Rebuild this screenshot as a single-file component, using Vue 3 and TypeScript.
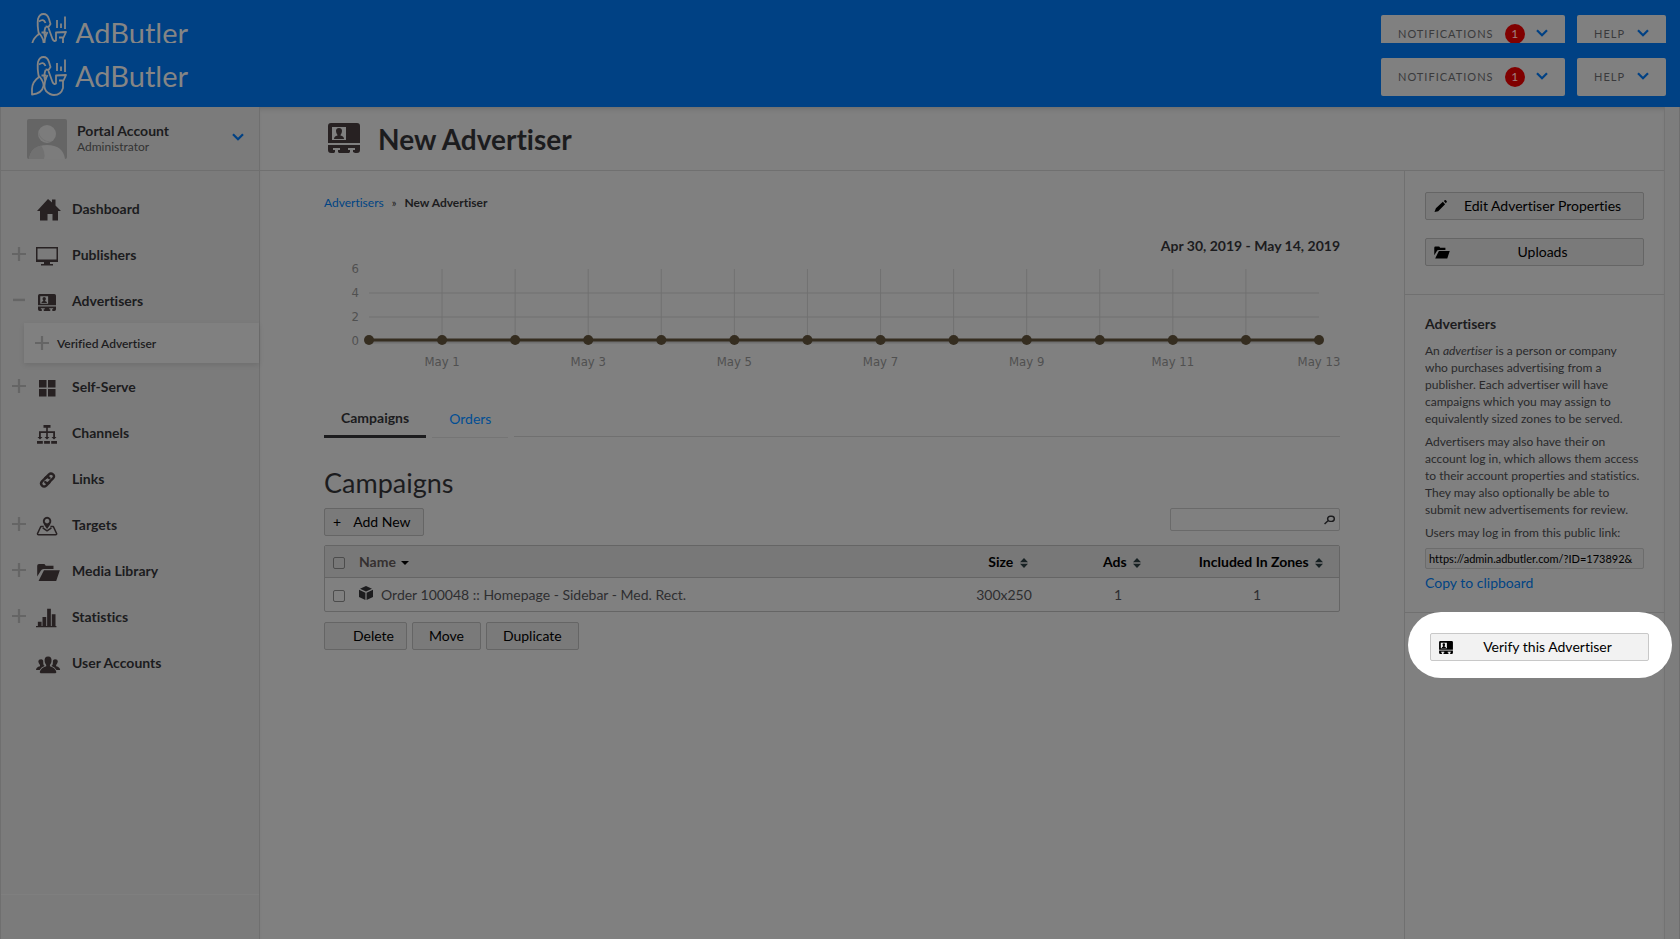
<script setup lang="ts">
import { ref } from 'vue'

interface NavItem {
  label: string
  icon: string
  toggle?: 'plus' | 'minus'
  child?: string
}

const nav: NavItem[] = [
  { label: 'Dashboard', icon: 'home' },
  { label: 'Publishers', icon: 'monitor', toggle: 'plus' },
  { label: 'Advertisers', icon: 'board', toggle: 'minus', child: 'Verified Advertiser' },
  { label: 'Self-Serve', icon: 'tiles', toggle: 'plus' },
  { label: 'Channels', icon: 'tree' },
  { label: 'Links', icon: 'link' },
  { label: 'Targets', icon: 'target', toggle: 'plus' },
  { label: 'Media Library', icon: 'folder', toggle: 'plus' },
  { label: 'Statistics', icon: 'bars', toggle: 'plus' },
  { label: 'User Accounts', icon: 'users' },
]

const points = Array.from({ length: 14 }, (_, i) => ({
  x: `${(i / 13) * 100}%`,
  label: i % 2 === 1 ? `May ${i}` : '',
}))
const yTicks = [6, 4, 2, 0]

const columns = ['Size', 'Ads', 'Included In Zones']
const rows = [{ name: 'Order 100048 :: Homepage - Sidebar - Med. Rect.', cells: ['300x250', '1', '1'] }]
const loginUrl = ref('https://admin.adbutler.com/?ID=173892&')
const query = ref('')
</script>

<template>
  <div class="page">
    <svg class="defs" aria-hidden="true">
      <symbol id="home" viewBox="0 0 26 26">
        <path d="M12 2l4 3.400V2.600h3.500v6L25 14h-3v9.500h-5.500V17h-5v6.500H4V14H1z" />
      </symbol>
      <symbol id="monitor" viewBox="2 0 26 26">
        <path fill-rule="evenodd" d="M2 4h22v15h-8v2h3v1.500H7V21h3v-2H2zM3.500 5.500v11h19v-11z" />
      </symbol>
      <symbol id="board" viewBox="0 0 32 30">
        <path fill-rule="evenodd" d="M3 0h26q3 0 3 3v17H0V3q0-3 3-3zM4 4v13h14V4z" />
        <path d="M6 16q0-3 3.500-3.500V12Q8 10 8 8q0-3 3-3t3 3q0 2-1.500 4v.5Q16 13 16 16z" />
        <path d="M0 22h32v5q0 3-3 3h-2l-2-1v-2h2v-2h-7v2h2v2l-1 1H11l-1-1v-2h2v-2H5v2h2v2l-1 1H3q-3 0-3-3z" />
      </symbol>
      <symbol id="tiles" viewBox="2 0 26 26">
        <path d="M5 5h7.500v7.500H5zM14 5h7.500v7.500H14zM5 14h7.500v7.500H5zM14 14h7.500v7.500H14z" />
      </symbol>
      <symbol id="tree" viewBox="2 0 26 26">
        <path d="M9.500 4h7v2.800h-2.700v3.400H21V16h1.500L20 18.600 17.500 16h1.700v-4h-5.400v4h1.700L13 18.600 10.500 16h1.700v-4H6.800v4h1.700L6 18.600 3.500 16H5v-5.800h7.200V6.800H9.500zM3 20h5.800v2.800H3zM10.100 20h5.800v2.800h-5.800zM17.200 20H23v2.800h-5.800z" />
      </symbol>
      <symbol id="link" viewBox="1 -1 28 28">
        <g fill="none" stroke="currentColor" stroke-width="2.600" stroke-linecap="round">
          <path d="M11 11l4-4q2-2 4.300 0t0 4.300l-4.300 4.300q-2 1.700-4-.3" />
          <path d="M15.500 15.500L12 19q-2.300 2-4.500 0t0-4.500l4-4q2-1.500 4 .5" />
        </g>
      </symbol>
      <symbol id="target" viewBox="2 -1 27 27">
        <path fill-rule="evenodd" d="M13.500 3a4.500 4.500 0 0 1 4.300 5.500Q17 11 13.500 15.500 10 11 9.200 8.500A4.500 4.500 0 0 1 13.500 3zm0 2a2.400 2.400 0 1 0 .01 0z" />
        <path fill="none" stroke="currentColor" stroke-width="1.600" stroke-linejoin="round" d="M10 13H7l-3.500 7.500q0 1 1 1h18q1 0 1-1L20 13h-3M9 14.500l4.500 3 4.500-3" />
      </symbol>
      <symbol id="folder" viewBox="1 1 25 21">
        <path d="M1 16V4q0-2 2-2h6l1.500 2H19v3.500H8q-2 0-3 2zM8.500 9H26l-4 12H2.500z" />
      </symbol>
      <symbol id="bars" viewBox="2 -1 28 28">
        <path d="M2 21.500h2V17h4v4.500h1V12h4v9.500h1V3h4v18.500h1V9h4v12.500h1V23H2z" />
      </symbol>
      <symbol id="users" viewBox="1 0 28 26">
        <path d="M14 5c3 0 4 2 3.700 5q-.2 2.500-1.700 4v1.500q6 1.500 7 6.500l-1 1H6l-1-1q1-5 7-6.500V14q-1.500-1.500-1.700-4C10 7 11 5 14 5zM6.500 8q2.500 0 2.300 3 0 4 2 4-4.500 1.500-5.800 4.500H1q0-3 4.300-4V14Q3.500 12 3.500 10t3-2zM21.500 8q-2.500 0-2.300 3 0 4-2 4 4.500 1.500 5.800 4.500h4q0-3-4.300-4V14q1.800-2 1.800-4t-3-2z" />
      </symbol>
      <symbol id="pencil" viewBox="0 0 14 14">
        <path d="M0 13l1.500-4L9 2l2.400 2.500L4 12zM10 1l1-.8q.7-.4 1.300.2l.7.800q.6.700 0 1.300l-.8 1z" />
      </symbol>
      <symbol id="box" viewBox="0 0 14 14">
        <path d="M7 0l6 2.700L7 5.500 1 2.700zM0 3.800l6.400 3V14L0 11zM14 3.800l-6.400 3V14L14 11z" />
      </symbol>
      <symbol id="search" viewBox="0 0 12 10">
        <path fill="none" stroke="currentColor" stroke-width="1.600" d="M4.700 5.500L.6 9.400M7 1h1.500a2.400 2.400 0 0 1 0 5.500H6.500a2.700 2.700 0 0 1 .5-5.500z" />
      </symbol>
      <symbol id="chevron" viewBox="0 0 12 8">
        <path fill="none" stroke="currentColor" stroke-width="2.200" d="M1 1.200l5 5 5-5" />
      </symbol>
      <symbol id="sort" viewBox="0 0 8 10">
        <path d="M4 0l4 4.300H0zM4 10l4-4.300H0z" />
      </symbol>
      <symbol id="plus" viewBox="0 0 14 14">
        <path d="M5.900 0h2.200v5.900H14v2.200H8.100V14H5.900V8.100H0V5.900h5.900z" />
      </symbol>
      <symbol id="minus" viewBox="0 0 14 14">
        <path d="M1 5.700h12v2.400H1z" />
      </symbol>
      <symbol id="butler" viewBox="0 0 36 40">
        <g fill="none" stroke="currentColor" stroke-width="1.800" stroke-linejoin="round">
          <path d="M8 22Q6 12 7 6q1.500-5 5.500-5T18 6l1.500 5L17.500 14l-3-.5" />
          <path d="M8 8.500q4.500-3.500 6.500 1.500M8 21q-7 5-7 12v5.500q10-1 11.500-8.500Q13 26 8 20M10.500 19.500h4.500" />
          <path d="M14.500 14q-2 6-.5 10l2.500-5M17.500 15l4 11q1.500 3 3.500 1.500V19.500l10-.5-2.500 5.500H28" />
          <path d="M15 22q-3 9 0 13 4 4 8 4 7 0 9-7v-7" />
          <path d="M26 7v8M30 10.500V15M34 3.500V16" />
        </g>
      </symbol>
    </svg>

    <header v-for="n in 2" :key="n" class="topbar" :class="{ cut: n === 1 }">
      <a class="brand" href="#" aria-label="AdButler">
        <svg class="butler"><use href="#butler" /></svg>
        <span>AdButler</span>
      </a>
      <div class="top-actions">
        <button type="button" class="top-btn">
          <span>NOTIFICATIONS</span><span class="count">1</span>
          <svg class="chev"><use href="#chevron" /></svg>
        </button>
        <button type="button" class="top-btn help">
          <span>HELP</span><svg class="chev"><use href="#chevron" /></svg>
        </button>
      </div>
    </header>

    <div class="shell">
      <aside class="sidebar">
        <button type="button" class="account">
          <svg class="avatar" viewBox="0 0 40 40">
            <rect width="40" height="40" rx="2" fill="#656565" />
            <circle cx="20" cy="15" r="9" fill="#7c7c7c" />
            <path d="M2 40q2-14 18-14t18 14z" fill="#7c7c7c" />
            <path d="M12 10q-2 6 3 10 5 5 12 1-6 3-11-1-5-4-4-10zM2 40q2-12 12-13.500 5 7 3 13.500z" fill="#717171" />
          </svg>
          <span class="who"><strong>Portal Account</strong><small>Administrator</small></span>
          <svg class="chev"><use href="#chevron" /></svg>
        </button>
        <nav class="nav">
          <template v-for="item in nav" :key="item.label">
            <a class="nav-item" href="#">
              <span class="toggle"><svg v-if="item.toggle"><use :href="'#' + item.toggle" /></svg></span>
              <svg class="nav-icon" :class="'icon-' + item.icon"><use :href="'#' + item.icon" /></svg>
              {{ item.label }}
            </a>
            <a v-if="item.child" class="nav-child" href="#">
              <svg><use href="#plus" /></svg>{{ item.child }}
            </a>
          </template>
        </nav>
        <div class="side-foot"></div>
      </aside>

      <div class="body">
        <div class="title-bar">
          <svg><use href="#board" /></svg>
          <h1>New Advertiser</h1>
        </div>
        <div class="columns">
          <main class="content">
            <div class="crumbs"><a href="#">Advertisers</a><span>»</span><strong>New Advertiser</strong></div>

            <div class="range">Apr 30, 2019 - May 14, 2019</div>
            <div class="chart">
              <div class="y-axis"><span v-for="t in yTicks" :key="t">{{ t }}</span></div>
              <svg class="plot">
                <g class="grid-lines">
                  <line v-for="p in points.slice(1, -1)" :key="p.x" :x1="p.x" :x2="p.x" y1="0" y2="71" />
                  <line x1="0" x2="100%" y1="24" y2="24" />
                  <line x1="0" x2="100%" y1="48" y2="48" />
                </g>
                <line class="shade" x1="0" x2="100%" y1="73" y2="73" />
                <line class="series" x1="0" x2="100%" y1="71" y2="71" />
                <circle v-for="p in points" :key="p.x" class="dot" :cx="p.x" cy="71" r="5" />
                <text v-for="p in points" :key="p.x" :x="p.x" y="97">{{ p.label }}</text>
              </svg>
            </div>

            <div class="tabs">
              <a class="tab active" href="#">Campaigns</a>
              <a class="tab" href="#">Orders</a>
              <span class="tab-rest"></span>
            </div>

            <h2>Campaigns</h2>
            <div class="tools">
              <button type="button" class="btn add"><span>+</span>Add New</button>
              <label class="search">
                <input v-model="query" type="text" aria-label="Search campaigns" />
                <svg><use href="#search" /></svg>
              </label>
            </div>

            <table class="grid">
              <thead>
                <tr>
                  <th class="check"><input type="checkbox" aria-label="Select all" /></th>
                  <th class="name">Name <i class="caret"></i></th>
                  <th v-for="(c, i) in columns" :key="c" :class="{ wide: i === 2 }" class="num">
                    {{ c }} <svg><use href="#sort" /></svg>
                  </th>
                </tr>
              </thead>
              <tbody>
                <tr v-for="r in rows" :key="r.name">
                  <td class="check"><input type="checkbox" :aria-label="'Select ' + r.name" /></td>
                  <td class="name"><svg><use href="#box" /></svg>{{ r.name }}</td>
                  <td v-for="(c, i) in r.cells" :key="i">{{ c }}</td>
                </tr>
              </tbody>
            </table>

            <div class="actions">
              <button type="button" class="btn delete">Delete</button>
              <button type="button" class="btn">Move</button>
              <button type="button" class="btn">Duplicate</button>
            </div>
          </main>

          <aside class="panel">
            <section class="panel-actions">
              <button type="button" class="btn block"><svg class="small"><use href="#pencil" /></svg><span>Edit Advertiser Properties</span></button>
              <button type="button" class="btn block"><svg><use href="#folder" /></svg><span>Uploads</span></button>
            </section>
            <section class="help-text">
              <h3>Advertisers</h3>
              <p>An <em>advertiser</em> is a person or company<br />who purchases advertising from a publisher. Each advertiser will have campaigns which you may assign to equivalently sized zones to be served.</p>
              <p>Advertisers may also have their on account log in, which allows them access to their account properties and statistics. They may also optionally be able to submit new advertisements for review.</p>
              <p><label for="login-link">Users may log in from this public link:</label></p>
              <input id="login-link" v-model="loginUrl" type="text" />
              <a href="#">Copy to clipboard</a>
            </section>
            <section class="spotlight">
              <button type="button" class="btn block"><svg class="small"><use href="#board" /></svg><span>Verify this Advertiser</span></button>
            </section>
          </aside>
        </div>
      </div>
      <div class="gutter"></div>
    </div>
  </div>
</template>

<style>
body {
  margin: 0;
  background: #808080;
}
</style>

<style scoped>
* {
  box-sizing: border-box;
}
.page {
  min-height: 100vh;
  display: flex;
  flex-direction: column;
  font-family: Lato, "Liberation Sans", sans-serif;
  font-size: 14px;
  font-variant-ligatures: none;
  color: #1c1c1e;
}
.defs {
  display: none;
}
svg {
  fill: currentColor;
  flex: none;
}
a {
  color: #004484;
  text-decoration: none;
}
button,
input {
  font: inherit;
  font-variant-ligatures: none;
  color: inherit;
}
h1,
h2,
h3,
p {
  margin: 0;
}

.topbar {
  flex: none;
  height: 64px;
  padding: 0 14px 0 31px;
  display: flex;
  align-items: flex-start;
  justify-content: space-between;
  background: #004184;
}
.topbar.cut {
  height: 43px;
  overflow: hidden;
}
.brand {
  display: flex;
  gap: 8px;
  color: #858585;
  font-size: 29px;
  line-height: 40px;
  padding-top: 13px;
}
.butler {
  width: 36px;
  height: 40px;
}
.top-actions {
  display: flex;
  gap: 12px;
  padding-top: 15px;
}
.top-btn {
  width: 184px;
  height: 38px;
  padding: 0 17px 2px;
  border: 0;
  border-radius: 2px;
  background: #808080;
  color: #3a3a3c;
  font-size: 11px;
  letter-spacing: 1px;
  display: flex;
  align-items: center;
  justify-content: space-between;
}
.top-btn.help {
  width: 89px;
}
.count {
  width: 20px;
  height: 20px;
  margin-top: 2px;
  border-radius: 50%;
  background: #800000;
  color: #a08080;
  font-size: 12px;
  letter-spacing: 0;
  line-height: 20px;
}
.chev {
  width: 12px;
  height: 8px;
  color: #004184;
}

.shell {
  flex: 1;
  display: flex;
}
.sidebar {
  flex: none;
  width: 260px;
  border: solid #6f6f6f;
  border-width: 0 1px;
  background: #7b7b7b;
  display: flex;
  flex-direction: column;
}
.account {
  height: 64px;
  border: 0;
  border-bottom: 1px solid #6f6f6f;
  background: none;
  padding: 0 15px 0 26px;
  display: flex;
  align-items: center;
  gap: 10px;
  text-align: left;
}
.avatar {
  width: 40px;
  height: 40px;
}
.account .chev {
  margin-bottom: 4px;
}
.who {
  flex: 1;
  display: grid;
}
.who strong {
  font-size: 14px;
  line-height: 16px;
}
.who small {
  font-size: 12px;
  line-height: 16px;
  color: #333;
}
.nav {
  flex: 1;
  padding-top: 14px;
}
.nav-item {
  height: 46px;
  display: flex;
  align-items: center;
  color: #1c1c1e;
  font-weight: 700;
}
.toggle {
  width: 35px;
  padding-left: 11px;
  color: #656565;
  display: flex;
}
.toggle svg,
.nav-child svg {
  width: 14px;
  height: 14px;
}
.nav-icon {
  width: 26px;
  height: 26px;
  margin-top: 4px;
  margin-right: 10px;
  color: #272122;
}
.icon-board {
  width: 18px;
  height: 17px;
  margin-left: 2px;
  margin-right: 16px;
}
.icon-folder {
  width: 23px;
  height: 19px;
  margin-left: 1px;
  margin-right: 12px;
}
.nav-child {
  height: 40px;
  margin-left: 23px;
  padding-left: 11px;
  display: flex;
  align-items: center;
  gap: 8px;
  background: #808080;
  box-shadow: 0 2px 5px rgba(0, 0, 0, 0.1);
  color: #1c1c1e;
  font-size: 12px;
  font-weight: 600;
}
.nav-child svg {
  color: #656565;
}
.side-foot {
  height: 45px;
  border-top: 1px solid #7f7f7f;
}

.body {
  flex: 1;
  min-width: 0;
  display: flex;
  flex-direction: column;
  box-shadow: inset 0 5px 5px -3px rgba(0, 0, 0, 0.15);
}
.title-bar {
  height: 64px;
  padding-left: 68px;
  border-bottom: 1px solid #707070;
  display: flex;
  align-items: center;
  gap: 18px;
}
.title-bar svg {
  width: 32px;
  height: 30px;
  margin-bottom: 2px;
  color: #272122;
}
h1 {
  font-size: 28px;
  line-height: 34px;
}
.columns {
  flex: 1;
  display: flex;
}
.content {
  flex: 1;
  min-width: 0;
  padding: 24px 64px 0;
}
.crumbs {
  display: flex;
  gap: 8px;
  font-size: 12px;
  line-height: 16px;
}
.crumbs span {
  font-size: 11px;
}
.range {
  margin-top: 26px;
  font-weight: 700;
  line-height: 18px;
  text-align: right;
}
.chart {
  margin-top: 4px;
  height: 114px;
  display: flex;
  font-family: "DejaVu Sans Condensed", "DejaVu Sans", sans-serif;
  font-size: 13px;
  color: #505050;
}
.y-axis {
  width: 45px;
  padding-right: 10px;
  display: grid;
  grid-auto-rows: 24px;
  align-content: start;
  line-height: 20px;
  text-align: right;
}
.plot {
  flex: 1;
  min-width: 0;
  height: 100px;
  margin: 10px 21px 0 0;
  overflow: visible;
}
.plot text {
  text-anchor: middle;
}
.grid-lines {
  stroke: #717171;
}
.series {
  stroke: #352d20;
  stroke-width: 3;
}
.shade {
  stroke: rgba(0, 0, 0, 0.12);
  stroke-width: 3;
}
.dot {
  fill: #352d20;
}
.tabs {
  margin-top: 26px;
  display: flex;
  align-items: flex-end;
  gap: 6px;
  height: 39px;
}
.tab {
  height: 38px;
  padding: 0 17px;
  border-bottom: 1px solid #757575;
  line-height: 38px;
  color: #004e94;
}
.tab.active {
  height: 39px;
  border-bottom: 3px solid #1c1c1e;
  color: #1c1c1e;
  font-weight: 700;
}
.tab-rest {
  flex: 1;
  height: 2px;
  border-top: 1px solid #707070;
}
h2 {
  margin-top: 29px;
  font-size: 27px;
  line-height: 32px;
  font-weight: 400;
}
.tools {
  margin-top: 9px;
  display: flex;
  justify-content: space-between;
}
.btn {
  height: 28px;
  padding: 0 16px 2px;
  border: 1px solid #656565;
  border-radius: 2px;
  background: #7a7a7a;
  color: #000;
}
.btn.add {
  padding: 0 12px 2px 8px;
}
.btn.add span {
  margin-right: 12px;
}
.btn.delete {
  padding: 0 12px 2px 28px;
}
.search {
  position: relative;
  width: 170px;
}
.search input {
  display: block;
  width: 100%;
  height: 23px;
  padding: 0 20px 0 6px;
  border: 1px solid #6a6a6a;
  border-radius: 2px;
  background: #808080;
}
.search svg {
  position: absolute;
  right: 5px;
  top: 7px;
  width: 11px;
  height: 10px;
}
.grid {
  margin-top: 9px;
  width: 100%;
  table-layout: fixed;
  border: 1px solid #656565;
  border-radius: 2px;
  border-spacing: 0;
  text-align: center;
}
.grid th,
.grid td {
  padding: 0;
}
.grid th {
  height: 32px;
  border-bottom: 1px solid #656565;
  background: #787878;
  color: #000;
}
.grid td {
  height: 33px;
  color: #2e2e30;
}
.grid .check {
  width: 34px;
  padding-left: 8px;
  text-align: left;
}
.check input {
  appearance: none;
  display: block;
  width: 12px;
  height: 12px;
  margin: 3px 0 0;
  border: 1px solid #4c4c4c;
  border-radius: 2px;
}
.grid .name {
  text-align: left;
}
.grid th.name {
  color: #353030;
}
.name svg {
  width: 14px;
  height: 14px;
  margin-right: 8px;
  color: #1c1c1e;
}
.caret {
  display: inline-block;
  margin-left: 2px;
  border: 4px solid transparent;
  border-top-color: #000;
  border-bottom: 0;
  vertical-align: 2px;
}
.num {
  width: 114px;
}
.grid .num {
  padding-left: 8px;
}
.num.wide {
  width: 164px;
}
.num svg {
  width: 8px;
  height: 10px;
  margin-left: 3px;
  vertical-align: -1px;
  color: #182224;
}
.actions {
  margin-top: 10px;
  display: flex;
  gap: 5px;
}

.panel {
  flex: none;
  width: 260px;
  border-left: 1px solid #707070;
}
.panel-actions {
  height: 124px;
  padding: 21px 20px 0;
  border-bottom: 1px solid #707070;
  display: grid;
  gap: 18px;
  align-content: start;
}
.block {
  width: 100%;
  padding: 0 8px;
  display: flex;
  align-items: center;
}
.block svg {
  width: 16px;
  height: 13px;
}
.block .small {
  width: 14px;
  margin-right: 2px;
}
.block span {
  flex: 1;
  padding-bottom: 2px;
}
.help-text {
  height: 318px;
  padding: 19px 18px 0 20px;
  border-bottom: 1px solid #707070;
  font-size: 12px;
  line-height: 17px;
  color: #29292b;
}
h3 {
  font-size: 14px;
  line-height: 20px;
  margin-bottom: 8px;
  color: #1c1c1e;
}
.help-text p {
  margin-bottom: 6px;
}
.help-text input {
  display: block;
  width: 219px;
  height: 21px;
  margin-top: 7px;
  padding: 0 3px;
  border: 1px solid #6c6c6c;
  border-radius: 2px;
  background: #7d7d7d;
  color: #000;
  font-size: 11px;
}
.help-text a {
  display: block;
  margin-top: 4px;
  font-size: 14px;
  line-height: 20px;
}
.spotlight {
  position: relative;
  height: 66px;
  margin: -1px -8px 0 3px;
  padding: 21px 23px 0 22px;
  border-radius: 33px;
  background: #fff;
}
.spotlight .btn {
  background: #f2f2f2;
  border-color: #c8c8c8;
}
.gutter {
  flex: none;
  width: 16px;
  border-left: 1px solid #737373;
  border-right: 1px solid #6f6f6f;
  background: #7d7d7d;
}
</style>
